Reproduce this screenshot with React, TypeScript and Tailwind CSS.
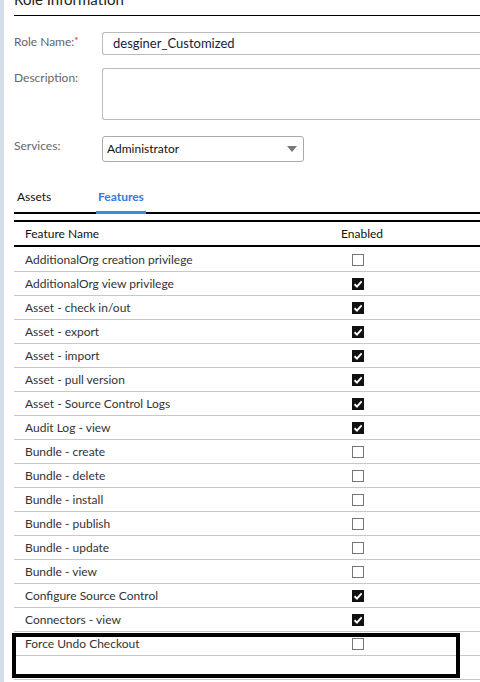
import React from "react";

const rows: [string, boolean][] = [
  ["AdditionalOrg creation privilege", false],
  ["AdditionalOrg view privilege", true],
  ["Asset - check in/out", true],
  ["Asset - export", true],
  ["Asset - import", true],
  ["Asset - pull version", true],
  ["Asset - Source Control Logs", true],
  ["Audit Log - view", true],
  ["Bundle - create", false],
  ["Bundle - delete", false],
  ["Bundle - install", false],
  ["Bundle - publish", false],
  ["Bundle - update", false],
  ["Bundle - view", false],
  ["Configure Source Control", true],
  ["Connectors - view", true],
  ["Force Undo Checkout", false],
  ["", false],
];

function Box({ checked }: { checked: boolean }) {
  if (checked) {
    return (
      <div className="w-[12px] h-[12px] bg-[#111] flex items-center justify-center">
        <svg width="10" height="10" viewBox="0 0 10 10">
          <path d="M1.5 5.2 L4 7.6 L8.6 2.4" stroke="#fff" strokeWidth="2" fill="none" />
        </svg>
      </div>
    );
  }
  return <div className="w-[12px] h-[12px] border border-[#777] bg-white" />;
}

export default function App() {
  return (
    <div
      className="relative w-[480px] h-[682px] overflow-hidden bg-white flex text-[#333]"
      style={{ fontFamily: "Lato, 'Open Sans', sans-serif" }}
    >
      <div className="w-[4px] shrink-0 bg-[#d5dde9]" />
      <div className="flex-1 pl-[10px] flex flex-col">
        <div className="-mt-[11px] h-[27px] text-[15px] leading-[20px] text-[#222] border-b border-black">
          Role Information
        </div>
        <div className="flex mt-[16px] h-[23px]">
          <div className="w-[88px] text-[12px] text-[#666] pt-[1px]">
            Role Name:<span className="text-[#e02020] text-[10px] align-top">*</span>
          </div>
          <div className="flex-1 border border-[#bbb] rounded-l-[3px] border-r-0 flex items-center pl-[10px] text-[13px] text-[#1a1a40]">
            desginer_Customized
          </div>
        </div>
        <div className="flex mt-[13px] h-[52px]">
          <div className="w-[88px] text-[12px] text-[#666] pt-[1px]">Description:</div>
          <div className="flex-1 border border-[#bbb] rounded-l-[3px] border-r-0" />
        </div>
        <div className="flex mt-[16px] h-[26px]">
          <div className="w-[88px] text-[12px] text-[#666] pt-[1px]">Services:</div>
          <div className="w-[202px] border border-[#aaa] rounded-[3px] flex items-center pl-[4px] text-[12px] text-[#111] justify-between pr-[6px]">
            <span>Administrator</span>
            <svg width="10" height="6" viewBox="0 0 10 6">
              <path d="M0 0 L10 0 L5 6 Z" fill="#777" />
            </svg>
          </div>
        </div>
        <div className="flex mt-[25px] h-[27px] border-b-2 border-black text-[12px]">
          <div className="pl-[3px] w-[82px] pt-[1px] text-[#111]">Assets</div>
          <div className="relative px-[2px] pt-[1px] font-bold text-[#2f7de1]">
            Features
            <div className="absolute left-0 right-0 -bottom-[2px] h-[3px] bg-[#3a8ae6]" />
          </div>
        </div>
        <div className="mt-[6px] border-t-2 border-b-2 border-black h-[27px] flex items-center text-[12px] text-[#111] pt-[1px]">
          <div className="pl-[11px] w-[327px]">Feature Name</div>
          <div>Enabled</div>
        </div>
        <div className="h-[1px] shrink-0" />
        {rows.map(([name, on], i) => (
          <div key={i} className="h-[24px] border-b border-[#c8c8c8] flex items-center text-[12px] text-[#333] shrink-0">
            <div className="pl-[11px] w-[338px]">{name}</div>
            {name && <Box checked={on} />}
          </div>
        ))}
      </div>
      <div className="absolute left-[12px] top-[633px] w-[448px] h-[45px] border-[4px] border-black" />
    </div>
  );
}
